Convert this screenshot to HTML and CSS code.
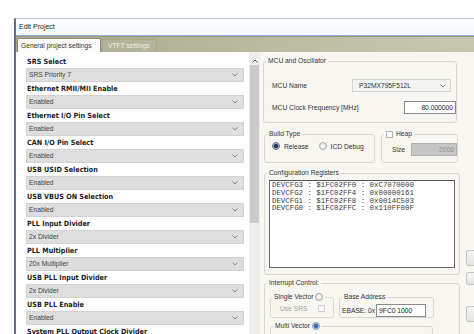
FILE: index.html
```html
<!DOCTYPE html>
<html>
<head>
<meta charset="utf-8">
<link rel="stylesheet" href="styles.css">
</head>
<body>
<div class="window">
  <div class="titlebar">Edit Project</div>
  <div class="tabs">
    <div class="tab active">General project settings</div>
    <div class="tab">VTFT settings</div>
  </div>
  <div class="main">
    <div class="left">
      <div class="lbl">SRS Select</div>
      <div class="sel">SRS Priority 7<svg class="chev" width="6" height="4" viewBox="0 0 6 4"><polyline points="0.5,0.5 3,3 5.5,0.5"/></svg></div>
      <div class="lbl">Ethernet RMII/MII Enable</div>
      <div class="sel">Enabled<svg class="chev" width="6" height="4" viewBox="0 0 6 4"><polyline points="0.5,0.5 3,3 5.5,0.5"/></svg></div>
      <div class="lbl">Ethernet I/O Pin Select</div>
      <div class="sel">Enabled<svg class="chev" width="6" height="4" viewBox="0 0 6 4"><polyline points="0.5,0.5 3,3 5.5,0.5"/></svg></div>
      <div class="lbl">CAN I/O Pin Select</div>
      <div class="sel">Enabled<svg class="chev" width="6" height="4" viewBox="0 0 6 4"><polyline points="0.5,0.5 3,3 5.5,0.5"/></svg></div>
      <div class="lbl">USB USID Selection</div>
      <div class="sel">Enabled<svg class="chev" width="6" height="4" viewBox="0 0 6 4"><polyline points="0.5,0.5 3,3 5.5,0.5"/></svg></div>
      <div class="lbl">USB VBUS ON Selection</div>
      <div class="sel">Enabled<svg class="chev" width="6" height="4" viewBox="0 0 6 4"><polyline points="0.5,0.5 3,3 5.5,0.5"/></svg></div>
      <div class="lbl">PLL Input Divider</div>
      <div class="sel">2x Divider<svg class="chev" width="6" height="4" viewBox="0 0 6 4"><polyline points="0.5,0.5 3,3 5.5,0.5"/></svg></div>
      <div class="lbl">PLL Multiplier</div>
      <div class="sel">20x Multiplier<svg class="chev" width="6" height="4" viewBox="0 0 6 4"><polyline points="0.5,0.5 3,3 5.5,0.5"/></svg></div>
      <div class="lbl">USB PLL Input Divider</div>
      <div class="sel">2x Divider<svg class="chev" width="6" height="4" viewBox="0 0 6 4"><polyline points="0.5,0.5 3,3 5.5,0.5"/></svg></div>
      <div class="lbl">USB PLL Enable</div>
      <div class="sel">Enabled<svg class="chev" width="6" height="4" viewBox="0 0 6 4"><polyline points="0.5,0.5 3,3 5.5,0.5"/></svg></div>
      <div class="lbl">System PLL Output Clock Divider</div>
      <div class="sel">1x Divider<svg class="chev" width="6" height="4" viewBox="0 0 6 4"><polyline points="0.5,0.5 3,3 5.5,0.5"/></svg></div>
    </div>
    <div class="scrollbar">
      <svg class="up" width="6" height="4" viewBox="0 0 6 4"><polyline points="0.5,3.5 3,1 5.5,3.5"/></svg>
      <div class="thumb"></div>
    </div>
    <div class="right">
      <div class="groups">
        <fieldset class="grp mcu">
          <legend>MCU and Oscillator</legend>
          <div class="frow">
            <span class="flabel">MCU Name</span>
            <div class="msel">P32MX795F512L<svg class="chev" width="6" height="4" viewBox="0 0 6 4"><polyline points="0.5,0.5 3,3 5.5,0.5"/></svg></div>
          </div>
          <div class="frow clock">
            <span class="flabel">MCU Clock Frequency [MHz]</span>
            <div class="input freq">80.000000</div>
          </div>
        </fieldset>
        <div class="pair">
          <fieldset class="grp build">
            <legend>Build Type</legend>
            <div class="radios">
              <span class="radio on"></span><span class="rtext">Release</span>
              <span class="radio"></span><span class="rtext">ICD Debug</span>
            </div>
          </fieldset>
          <fieldset class="grp heap">
            <legend><span class="check"></span>Heap</legend>
            <div class="sizerow">
              <span>Size</span>
              <div class="input dis">2000</div>
            </div>
          </fieldset>
        </div>
        <fieldset class="grp config">
          <legend>Configuration Registers</legend>
          <div class="regs">DEVCFG3 : $1FC02FF0 : 0xC7070000
DEVCFG2 : $1FC02FF4 : 0x00000161
DEVCFG1 : $1FC02FF8 : 0x0014C503
DEVCFG0 : $1FC02FFC : 0x110FF00F</div>
        </fieldset>
        <fieldset class="grp irq">
          <legend>Interrupt Control:</legend>
          <div class="irqrow">
            <fieldset class="grp single">
              <legend>Single Vector <span class="radio"></span></legend>
              <div class="srs"><span>Use SRS</span><span class="check"></span></div>
            </fieldset>
            <fieldset class="grp base">
              <legend>Base Address</legend>
              <div class="ebase"><span>EBASE: 0x</span><div class="input ebin">9FC0 1000</div></div>
            </fieldset>
          </div>
          <fieldset class="grp multi">
            <legend>Multi Vector <span class="radio blue"></span></legend>
            <div class="multibody"></div>
          </fieldset>
        </fieldset>
      </div>
      <div class="buttons">
        <div class="btn b1"></div>
        <div class="btn b2"></div>
        <div class="btn b3"></div>
      </div>
    </div>
  </div>
</div>
</body>
</html>
```

FILE: styles.css
```css
html, body {
  margin: 0;
  padding: 0;
  background: #ffffff;
  overflow: hidden;
  width: 474px;
  height: 334px;
}
body {
  font-family: "Liberation Sans", Arial, sans-serif;
  font-size: 6.7px;
  color: #222;
  white-space: nowrap;
}
.window {
  margin: 18px 0 0 14px;
  width: 480px;
  border-left: 2px solid #5d6e86;
  border-top: 1px solid #b4c4d8;
  background: #fff;
}
.titlebar {
  height: 16px;
  line-height: 16px;
  padding-left: 3px;
  font-size: 7px;
  color: #222;
  border-bottom: 1px solid #8fb2dc;
  background: linear-gradient(#ffffff, #f6f8fb);
}
.tabs {
  height: 15px;
  display: flex;
  align-items: flex-end;
  background: linear-gradient(to right, #a7a88a, #b9ba9f 50%, #c7c8b2);
  border-top: 1px solid #98997c;
}
.tab {
  height: 12px;
  line-height: 12px;
  color: #eeeee4;
  font-size: 6.7px;
}
.tab.active {
  margin-left: 1px;
  width: 79px;
  padding-left: 3px;
  height: 13px;
  line-height: 13px;
  background: #fbfbf8;
  color: #333;
  border: 1px solid #8c8c78;
  border-bottom: none;
  border-radius: 2px 2px 0 0;
}
.tab:not(.active) {
  margin-left: 1px;
  width: 48px;
  padding-left: 5px;
  background: #b3b499;
  border: 1px solid #a6a78b;
  border-bottom: none;
}
.main {
  display: flex;
  height: 290px;
}
.left {
  width: 233px;
  padding-top: 3px;
  background: #ffffff;
  overflow: hidden;
}
.lbl {
  height: 13px;
  line-height: 13px;
  padding-left: 11px;
  font-weight: bold;
  font-family: "DejaVu Sans Condensed", "DejaVu Sans", sans-serif;
  font-size: 7.2px;
  color: #1e1e1e;
}
.sel {
  margin-left: 10px;
  width: 209px;
  height: 12px;
  line-height: 12px;
  padding: 0 5px 0 2px;
  background: #dedede;
  border: 1px solid #d2d2d2;
  color: #444;
  display: flex;
  align-items: center;
  justify-content: space-between;
}
.chev {
  fill: none;
  stroke: #888;
  stroke-width: 1;
}
.scrollbar {
  width: 11px;
  background: #ededeb;
  display: flex;
  flex-direction: column;
  align-items: center;
  border-right: 2px solid #f7f7f3;
}
.up {
  margin-top: 7px;
  fill: none;
  stroke: #555;
  stroke-width: 1;
}
.thumb {
  margin-top: 2px;
  width: 9px;
  height: 158px;
  background: #cbcbcb;
}
.right {
  flex: 1;
  display: flex;
  background: #f7f6f1;
}
.groups {
  width: 196px;
  margin-left: 1px;
}
.grp {
  margin: 0;
  padding: 0;
  min-width: 0;
  border: 1px solid #d9d8d0;
  border-radius: 3px;
  box-sizing: border-box;
}
.grp legend {
  margin-left: 2px;
  padding: 0 2px;
  line-height: 10px;
  color: #333;
}
.mcu {
  margin-top: 4px;
  width: 194px;
  height: 67px;
}
.frow {
  display: flex;
  align-items: center;
  height: 13px;
  margin-top: 13px;
  padding-left: 8px;
}
.frow.clock {
  margin-top: 9px;
}
.flabel {
  width: 80px;
  color: #333;
}
.msel {
  width: 87px;
  height: 11px;
  padding: 0 4px 0 6px;
  border: 1px solid #d4d4d0;
  background: #f3f3f1;
  display: flex;
  align-items: center;
  justify-content: space-between;
  color: #333;
}
.input {
  height: 11px;
  line-height: 11px;
  border: 1px solid #8a8a8a;
  background: #fff;
  padding: 0 2px;
}
.freq {
  margin-left: 52px;
  width: 46px;
  text-align: right;
  color: #222;
}
.pair {
  display: flex;
  margin-top: 6px;
}
.build {
  margin-left: 1px;
  width: 111px;
  height: 34px;
}
.radios {
  display: flex;
  align-items: center;
  margin-top: 1px;
  padding-left: 7px;
  height: 12px;
}
.radio {
  display: inline-block;
  width: 6px;
  height: 6px;
  border-radius: 50%;
  border: 1px solid #a8a8a8;
  background: radial-gradient(#ffffff, #dcdcdc);
  vertical-align: middle;
}
.radio.on {
  border-color: #5b6f8a;
  background: radial-gradient(#1e3a62 0 1.8px, #8fa2bb 2.4px, #e6e9ee 3.2px);
}
.radio.blue {
  border-color: #7d97b8;
  background: radial-gradient(#2f6fb0 0 1.8px, #a6c0de 2.6px, #e6eef7 3.2px);
}
.rtext {
  margin-left: 4px;
  margin-right: 10px;
  color: #333;
}
.heap {
  margin-left: 6px;
  width: 77px;
  height: 34px;
}
.check {
  display: inline-block;
  width: 5px;
  height: 5px;
  border: 1px solid #b4b4b4;
  background: #fbfbfb;
  margin-right: 3px;
  vertical-align: middle;
}
.sizerow {
  display: flex;
  align-items: center;
  margin-top: 4px;
  padding-left: 10px;
  color: #333;
}
.dis {
  margin-left: 6px;
  width: 40px;
  background: #c6c6c6;
  border-color: #b0b0b0;
  color: #8e8e8e;
  text-align: right;
}
.config {
  margin-top: 5px;
  margin-left: 1px;
  width: 196px;
  height: 107px;
}
.regs {
  margin: 2px 0 0 4px;
  width: 182px;
  height: 85px;
  border: 1px solid #6a6a6a;
  border-top-color: #555;
  background: #fff;
  padding: 1px 0 0 2px;
  font-family: "Liberation Mono", monospace;
  font-size: 7.4px;
  line-height: 7.8px;
  color: #3a3a3a;
  white-space: pre;
}
.irq {
  margin-top: 3px;
  margin-left: 1px;
  width: 196px;
  height: 80px;
}
.irqrow {
  display: flex;
  margin-top: 4px;
}
.single {
  margin-left: 5px;
  width: 64px;
  height: 26px;
}
.single legend {
  margin-left: 1px;
}
.srs {
  display: flex;
  align-items: center;
  margin-top: 3px;
  padding-left: 9px;
  color: #a0a0a0;
}
.srs .check {
  margin-left: 10px;
  border-color: #cfcfcf;
}
.base {
  margin-left: 5px;
  width: 95px;
  height: 26px;
}
.ebase {
  display: flex;
  align-items: center;
  margin-top: 2px;
  padding-left: 2px;
  color: #333;
}
.ebin {
  width: 44px;
  margin-left: 1px;
  color: #222;
}
.multi {
  margin-top: 3px;
  margin-left: 5px;
  width: 163px;
  height: 30px;
}
.buttons {
  display: flex;
  flex-direction: column;
  margin-left: 7px;
}
.btn {
  width: 14px;
  border: 1px solid #c6c6c2;
  border-radius: 2px;
  background: linear-gradient(#f6f6f4, #e4e4e0);
}
.b1 { margin-top: 198px; height: 14px; }
.b2 { margin-top: 6px; height: 11px; }
.b3 { margin-top: 21px; height: 14px; }
```
